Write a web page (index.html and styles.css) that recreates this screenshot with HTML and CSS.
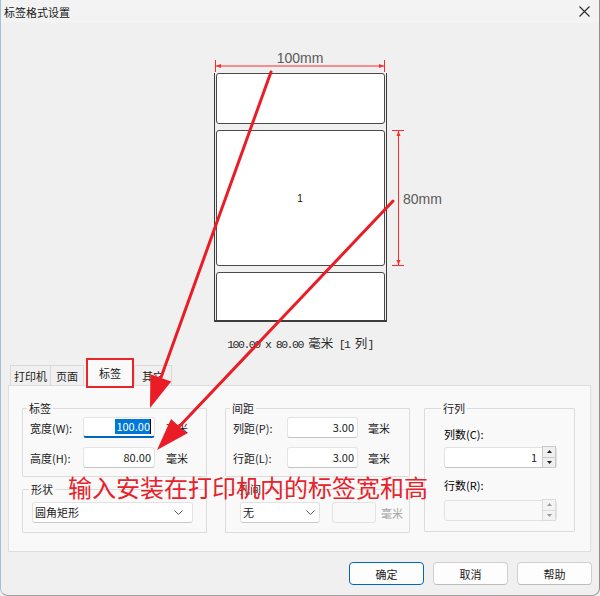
FILE: index.html
```html
<!DOCTYPE html>
<html lang="zh">
<head>
<meta charset="utf-8">
<title>标签格式设置</title>
<link rel="stylesheet" href="styles.css">
</head>
<body>
<div class="window">
  <div class="titlebar">
    <span class="title">标签格式设置</span>
    <svg class="close" width="11" height="11" viewBox="0 0 11 11"><path d="M0.5 0.5L10.5 10.5M10.5 0.5L0.5 10.5" stroke="#2b2b2b" stroke-width="1.1" fill="none"/></svg>
  </div>

  <div class="preview">
    <div class="sheet">
      <div class="lbl top"></div>
      <div class="lbl mid"><span class="num">1</span></div>
      <div class="lbl bot"></div>
    </div>
    <div class="caption"><span class="mono">100.00 x 80.00 </span><span class="cjk">毫米</span><span class="mono"> [1 </span><span class="cjk">列</span><span class="mono">]</span></div>
  </div>

  <div class="tabs">
    <div class="tab t1">打印机</div>
    <div class="tab t2">页面</div>
    <div class="tab sel">标签</div>
    <div class="tab t4">其它</div>
  </div>

  <div class="panel">
    <div class="col c1">
      <fieldset class="grp g-size">
        <legend>标签</legend>
        <div class="rows">
          <span class="lab">宽度(W):</span>
          <div class="inp focus"><span class="hl">100.00</span><i class="caret"></i></div>
          <span class="unit">毫米</span>
          <span class="lab">高度(H):</span>
          <div class="inp">80.00</div>
          <span class="unit">毫米</span>
        </div>
      </fieldset>
      <fieldset class="grp g-shape">
        <legend>形状</legend>
        <div class="select wide"><span>圆角矩形</span><svg width="9" height="5" viewBox="0 0 9 5"><path d="M0.5 0.5L4.5 4.5L8.5 0.5" stroke="#555" fill="none"/></svg></div>
      </fieldset>
    </div>
    <div class="col c2">
      <fieldset class="grp g-gap">
        <legend>间距</legend>
        <div class="rows">
          <span class="lab">列距(P):</span>
          <div class="inp">3.00</div>
          <span class="unit">毫米</span>
          <span class="lab">行距(L):</span>
          <div class="inp">3.00</div>
          <span class="unit">毫米</span>
        </div>
      </fieldset>
      <fieldset class="grp g-hole">
        <legend>孔间</legend>
        <div class="hole-row">
          <div class="select narrow"><span>无</span><svg width="9" height="5" viewBox="0 0 9 5"><path d="M0.5 0.5L4.5 4.5L8.5 0.5" stroke="#555" fill="none"/></svg></div>
          <div class="inp dis small"></div>
          <span class="unit dis-text">毫米</span>
        </div>
      </fieldset>
    </div>
    <div class="col c3">
      <fieldset class="grp g-rc">
        <legend>行列</legend>
        <div class="lab2">列数(C):</div>
        <div class="spin">
          <span class="val">1</span>
          <div class="btns">
            <span class="sb"><svg width="5" height="3" viewBox="0 0 5 3"><path d="M0 3L2.5 0L5 3Z" fill="#222"/></svg></span>
            <span class="sb"><svg width="5" height="3" viewBox="0 0 5 3"><path d="M0 0L2.5 3L5 0Z" fill="#222"/></svg></span>
          </div>
        </div>
        <div class="lab2 dis-text second">行数(R):</div>
        <div class="spin dis">
          <span class="val"></span>
          <div class="btns">
            <span class="sb"><svg width="5" height="3" viewBox="0 0 5 3"><path d="M0 3L2.5 0L5 3Z" fill="#9a9a9a"/></svg></span>
            <span class="sb"><svg width="5" height="3" viewBox="0 0 5 3"><path d="M0 0L2.5 3L5 0Z" fill="#9a9a9a"/></svg></span>
          </div>
        </div>
      </fieldset>
    </div>
  </div>

  <div class="buttons">
    <div class="btn primary">确定</div>
    <div class="btn">取消</div>
    <div class="btn">帮助</div>
  </div>

  <svg class="overlay dims" width="600" height="596" viewBox="0 0 600 596">
    <g stroke="#ff2a2a" stroke-width="1" fill="none">
      <path d="M215 66H384M215.5 60V72M384.5 60V72"/>
      <path d="M398.5 130V266M392 130.5H404M392 265.5H404"/>
    </g>
    <g fill="#ff2a2a">
      <path d="M216 66L221 64L221 68Z"/>
      <path d="M384 66L379 64L379 68Z"/>
      <path d="M398.5 131L396.5 136L400.5 136Z"/>
      <path d="M398.5 265L396.5 260L400.5 260Z"/>
    </g>
    <text x="300" y="63" text-anchor="middle" class="dimtext">100mm</text>
    <text x="403" y="204" class="dimtext">80mm</text>
  </svg>

  <svg class="overlay annot" width="600" height="596" viewBox="0 0 600 596">
    <g stroke="#ea1d26" stroke-width="3" fill="none" stroke-linecap="round">
      <path d="M271 72L160.8 377.9"/>
      <path d="M393 201L179 426.7"/>
    </g>
    <g fill="#ea1d26">
      <path d="M150 408L171.2 381.6L150.4 374.2Z"/>
      <path d="M157 450L187 433.6L171 418.9Z"/>
    </g>
  </svg>
  <div class="note">输入安装在打印机内的标签宽和高</div>
</div>
</body>
</html>
```

FILE: styles.css
```css
* { box-sizing: border-box; }

body {
  margin: 0;
  background: #f0f0f0;
  font-family: "Noto Sans CJK SC", "Noto Sans", sans-serif;
  font-size: 11px;
  color: #1b1b1b;
}

.window {
  position: relative;
  width: 600px;
  height: 596px;
  background: #f0f0f0;
  border-left: 1px solid #a6bedc;
  border-right: 1px solid #8e8e8e;
  border-bottom: 1px solid #a0a0a0;
  border-radius: 0 0 8px 8px;
  overflow: hidden;
}

.titlebar {
  height: 23px;
  display: flex;
  align-items: center;
  justify-content: space-between;
  padding: 0 9px 0 3px;
  background: #f3f3f3;
  font-size: 11px;
  line-height: 14px;
}

.close { display: block; }

/* preview */
.preview {
  height: 334px;
  display: flex;
  flex-direction: column;
  align-items: center;
  padding-top: 50px;
}

.sheet {
  width: 173px;
  height: 249px;
  border-left: 1px solid #3c3c3c;
  border-right: 1px solid #3c3c3c;
  border-bottom: 2px solid #3c3c3c;
  padding: 0 1px;
  display: flex;
  flex-direction: column;
  gap: 6px;
  overflow: hidden;
}

.lbl {
  flex-shrink: 0;
  background: #fff;
  border: 1px solid #4a4a4a;
  border-radius: 3px;
}
.lbl.top { height: 51px; }
.lbl.mid {
  height: 136px;
  display: flex;
  align-items: center;
  justify-content: center;
}
.lbl.bot { height: 60px; }

.num {
  font-family: "Liberation Sans", sans-serif;
  font-size: 10px;
  color: #111;
}

.caption {
  margin-top: 14px;
  line-height: 14px;
  color: #2a2a2a;
  white-space: pre;
}
.mono {
  font-family: "Liberation Mono", monospace;
  font-size: 11.5px;
  letter-spacing: -1.5px;
}
.cjk { font-size: 12.5px; }

/* tabs */
.tabs {
  position: relative;
  z-index: 2;
  height: 28px;
  display: flex;
  align-items: flex-end;
  padding-left: 9px;
}

.tab {
  height: 20px;
  border: 1px solid #d9d9d9;
  border-bottom: none;
  background: #f0f0f0;
  display: flex;
  align-items: center;
  justify-content: center;
  line-height: 14px;
}
.tab.t1 { width: 41px; }
.tab.t2 { width: 34px; margin-left: -1px; }
.tab.t4 { width: 38px; margin-left: 1px; }
.tab.sel {
  position: relative;
  width: 46px;
  height: 27px;
  margin-left: 3px;
  margin-bottom: -1px;
  background: #f9f9f9;
  padding-bottom: 1px;
}
.tab.sel::after {
  content: "";
  position: absolute;
  top: -2px;
  left: -2px;
  right: -2px;
  bottom: -2px;
  border: 2px solid #e5262d;
}

/* panel */
.panel {
  height: 167px;
  margin: 0 8px 0 7px;
  background: #f9f9f9;
  border: 1px solid #dedede;
  display: flex;
  align-items: flex-start;
  padding: 15px 0 0 13px;
}

.col { display: flex; flex-direction: column; }
.c1 { width: 185px; }
.c2 { width: 185px; margin-left: 18px; }
.c3 { width: 151px; margin-left: 14px; }

.grp {
  margin: 0;
  min-width: 0;
  border: 1px solid #dcdcdc;
  border-radius: 1px;
}
.grp legend {
  padding: 0 2px;
  margin-left: -3px;
  line-height: 14px;
  font-size: 11px;
}

.g-size, .g-gap { padding: 2px 8px 8px 7px; }
.g-shape { margin-top: 5px; padding: 6px 13px 9px 9px; }
.g-hole { margin-top: 5px; padding: 6px 0 9px 14px; }
.g-rc { padding: 11px 17px 10px 19px; }

.rows {
  display: grid;
  grid-template-columns: 53px 72px auto;
  row-gap: 9px;
  align-items: center;
  line-height: 16px;
}
.unit { margin-left: 11px; white-space: nowrap; }
.g-gap .rows { grid-template-columns: 54px 71px auto; }
.g-gap .unit { margin-left: 10px; }

.inp {
  height: 21px;
  background: #fff;
  border: 1px solid #e4e4e4;
  border-bottom-color: #c4c4c4;
  border-radius: 3px;
  display: flex;
  align-items: center;
  justify-content: flex-end;
  padding-right: 3px;
  line-height: 15px;
}
.inp.focus {
  border-bottom: 2px solid #0067c0;
  padding-bottom: 1px;
}
.hl {
  background: #0078d7;
  color: #fff;
  padding: 0 0 0 1px;
  line-height: 15px;
}
.caret {
  display: block;
  width: 1px;
  height: 15px;
  background: #000;
}

.select {
  height: 21px;
  background: #fff;
  border: 1px solid #e2e2e2;
  border-bottom-color: #c8c8c8;
  border-radius: 3px;
  display: flex;
  align-items: center;
  justify-content: space-between;
  padding: 0 9px 0 2px;
  line-height: 15px;
}
.select svg { display: block; }
.select.narrow { width: 80px; flex-shrink: 0; padding-left: 2px; padding-right: 4px; }

.hole-row {
  display: flex;
  align-items: center;
  line-height: 16px;
  white-space: nowrap;
}
.inp.dis {
  background: #f9f9f9;
  border: 1px solid #e2e2e2;
}
.inp.small { width: 44px; flex-shrink: 0; margin-left: 12px; }
.hole-row .unit { margin-left: 5px; }
.dis-text { color: #a3a3a3; }

.lab2 { line-height: 16px; color: #000; }
.lab2.second { margin-top: 9px; }

.spin {
  margin-top: 5px;
  height: 21px;
  background: #fff;
  border: 1px solid #e2e2e2;
  border-bottom-color: #c4c4c4;
  border-radius: 3px;
  display: flex;
  align-items: center;
  padding-right: 0;
}
.spin.dis {
  margin-top: 7px;
  background: #f9f9f9;
  border-color: #e2e2e2;
}
.spin .val {
  flex: 1;
  text-align: right;
  padding-right: 5px;
  line-height: 15px;
}
.btns {
  width: 14px;
  height: 21px;
  display: flex;
  flex-direction: column;
  margin-right: 0;
}
.sb {
  flex: 1;
  display: flex;
  align-items: center;
  justify-content: center;
  background: #efefef;
  border: 1px solid #c9c9c9;
  margin-top: -1px;
}
.sb svg { display: block; }
.spin.dis .sb { background: #f3f3f3; border-color: #dcdcdc; }

/* buttons */
.buttons {
  display: flex;
  justify-content: flex-end;
  gap: 9px;
  margin-top: 10px;
  padding-right: 7px;
}
.btn {
  width: 75px;
  height: 23px;
  background: #fdfdfd;
  border: 1px solid #d0d0d0;
  border-bottom-color: #bcbcbc;
  border-radius: 4px;
  display: flex;
  align-items: center;
  justify-content: center;
  line-height: 14px;
}
.btn.primary { border: 1px solid #0067c0; }

/* overlays */
.overlay {
  position: absolute;
  top: 0;
  left: -1px;
  pointer-events: none;
}
.dims { z-index: 1; }
.annot { z-index: 5; }
.dimtext {
  font-family: "Liberation Sans", sans-serif;
  font-size: 14px;
  fill: #5a5a5a;
}

.note {
  position: absolute;
  z-index: 6;
  left: 67px;
  top: 475px;
  font-size: 24px;
  line-height: 24px;
  color: #e8222b;
  white-space: nowrap;
}
```
